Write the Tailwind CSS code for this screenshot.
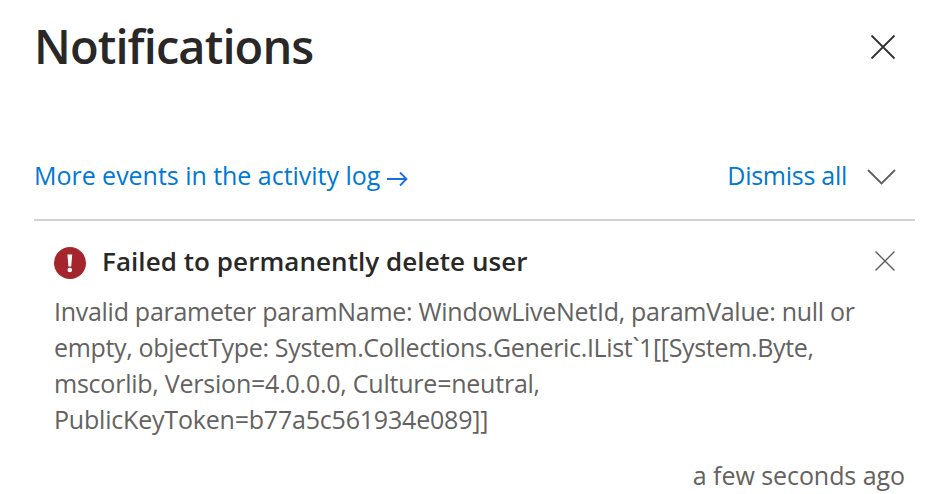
<!DOCTYPE html>
<html lang="en"><head><meta charset="utf-8"><title>Notifications</title>
<script src="https://cdn.jsdelivr.net/npm/@tailwindcss/browser@4"></script></head>
<body class="w-[944px] h-[494px] overflow-hidden bg-white font-['Open_Sans','Noto_Sans',sans-serif] text-[#646260]">
<main class="pl-[34px] pr-[29px]">
<header class="flex h-[94px] items-center justify-between pr-[19px]">
<h1 class="whitespace-nowrap pb-[2px] text-[47px] leading-none font-semibold tracking-[-0.9px] text-[#292827]">Notifications</h1>
<button aria-label="Close"><svg class="block size-[26px]" viewBox="0 0 26 26" fill="none" stroke="#323130" stroke-width="1.8"><path d="M1.5 1.5 24.5 24.5M24.5 1.5 1.5 24.5"/></svg></button>
</header>
<nav class="mt-[53px] flex h-[74px] items-center justify-between border-b-2 border-[#d2d2d2] pb-[14px] text-[25px] text-[#0078d4]">
<a class="flex items-center"><span class="tracking-[-0.03px]">More events in the activity log</span><svg class="mt-[5px] ml-[7px] h-[16px] w-[21px]" viewBox="0 0 21 16" fill="none" stroke="#1a6fe0" stroke-width="1.8"><path d="M0 8H19.5M13 1.5 19.5 8 13 14.5"/></svg></a>
<div class="flex items-center pr-[19px]"><a class="tracking-[-0.27px]">Dismiss all</a><svg class="mt-[2px] ml-[20px] h-[18px] w-[29px]" viewBox="0 0 29 18" fill="none" stroke="#605e5c" stroke-width="1.8"><path d="M1 2 14.5 15.5 28 2"/></svg></div>
</nav>
<article class="pl-[20px]">
<div class="mt-[22px] flex h-[40px] items-center">
<svg class="size-8" viewBox="0 0 32 32"><circle cx="16" cy="16" r="16" fill="#a4262c"/><path d="M13.4 7.5h4.8l-1 12h-2.8z" fill="#fff"/><circle cx="15.8" cy="23" r="2.3" fill="#fff"/></svg>
<h2 class="ml-4 pb-[3px] text-[26px] font-semibold tracking-[0.06px] text-[#292827]">Failed to permanently delete user</h2>
<svg class="mr-[20px] mb-[4px] ml-auto size-[20px]" viewBox="0 0 20 20" fill="none" stroke="#605e5c" stroke-width="1.4"><path d="m.5.5 19 19M19.5.5.5 19.5"/></svg>
</div>
<p class="mt-[10px] whitespace-nowrap text-[25px] leading-[36px]"><span class="tracking-[-0.28px]">Invalid parameter paramName: WindowLiveNetId, paramValue: null or</span><br><span class="tracking-[-0.33px]">empty, objectType: System.Collections.Generic.IList`1[[System.Byte,</span><br><span class="tracking-[-0.23px]">mscorlib, Version=4.0.0.0, Culture=neutral,</span><br><span class="tracking-[-0.2px]">PublicKeyToken=b77a5c561934e089]]</span></p>
<p class="mt-[20px] pr-[10px] text-right text-[25px] leading-[36px] tracking-[-0.06px]">a few seconds ago</p>
</article></main></body></html>
